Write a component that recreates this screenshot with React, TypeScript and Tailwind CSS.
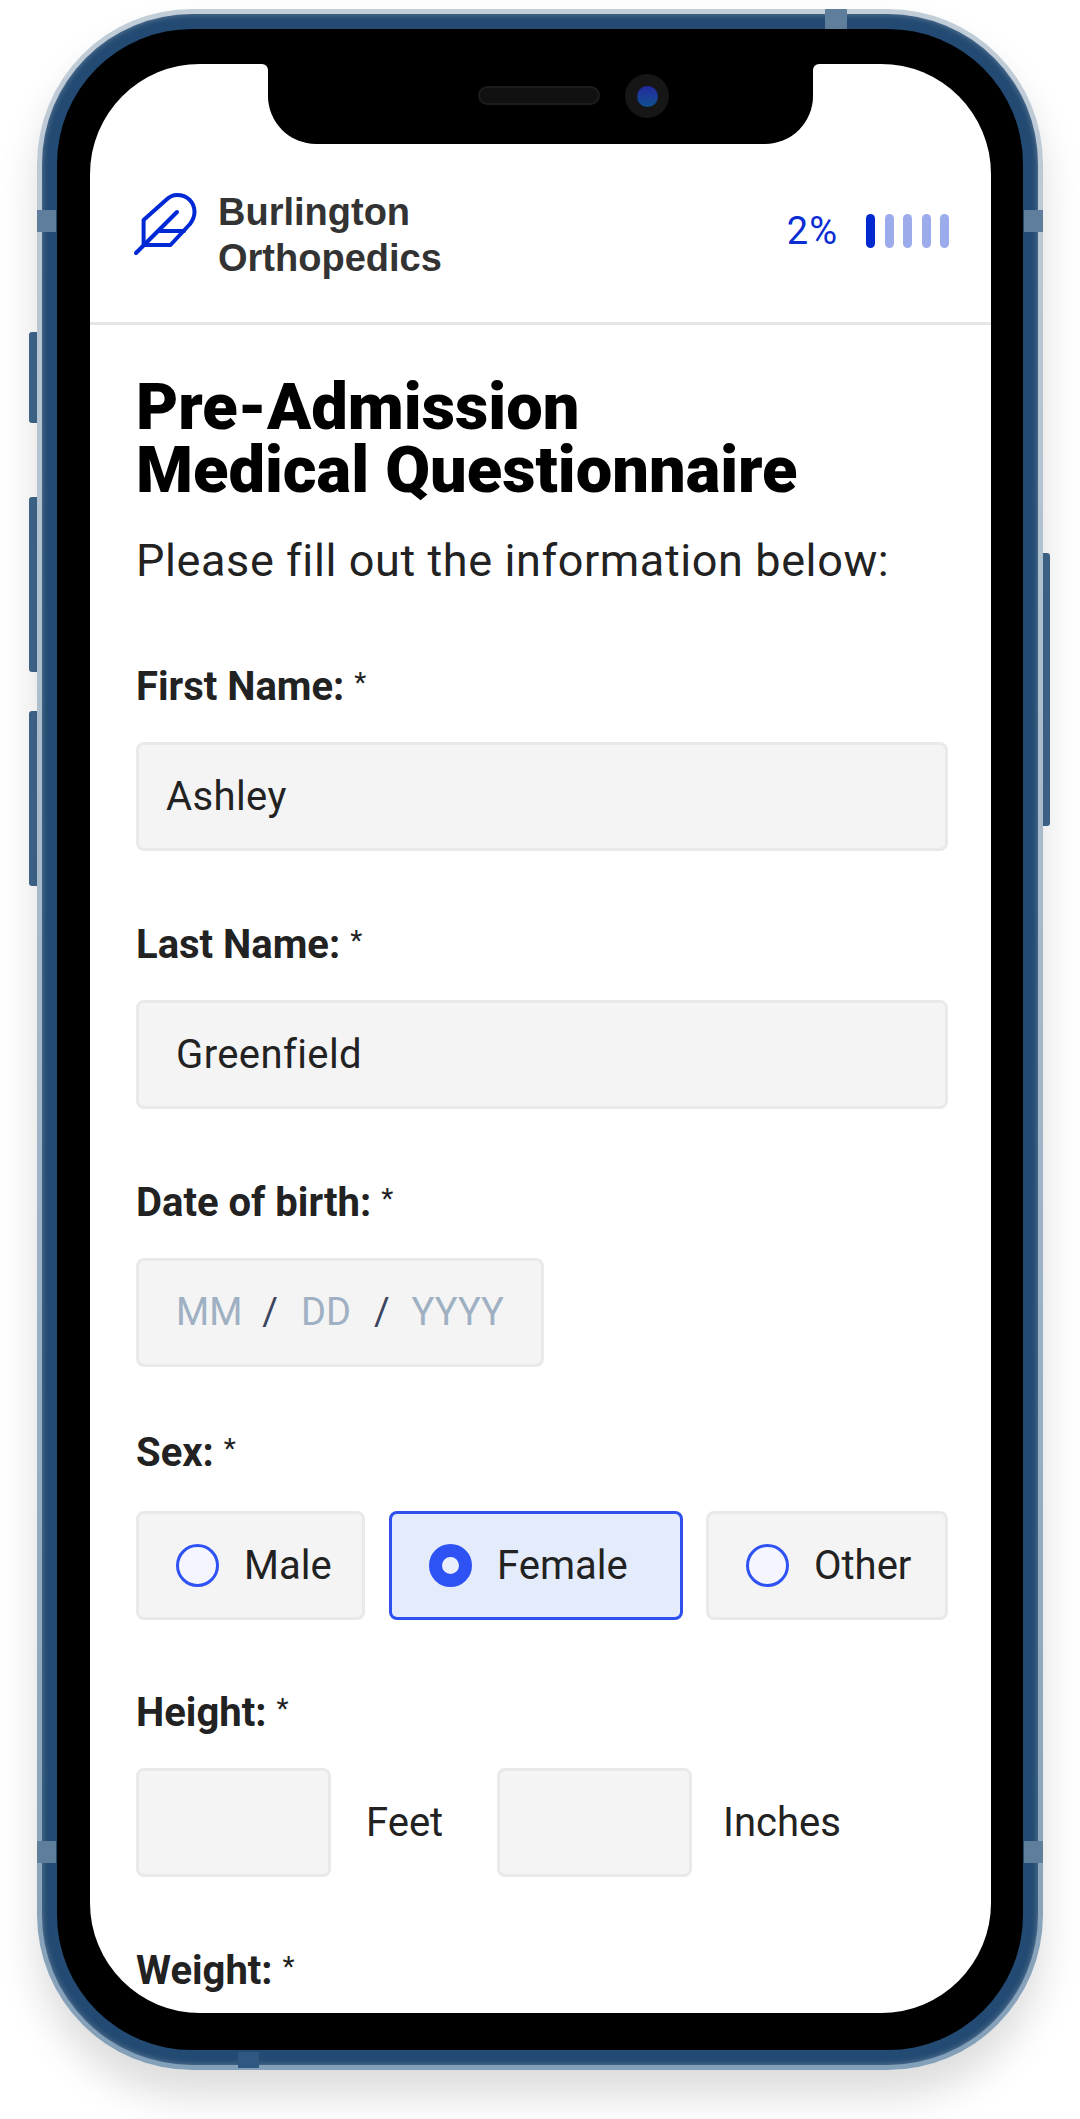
import React from 'react';

function Label({ text, className }: { text: string; className: string }) {
  return (
    <div className={`text-[40px] leading-[46px] font-bold text-[#222] ${className}`}>
      {text} <span className="align-[8px] text-[28px] leading-none font-normal">*</span>
    </div>
  );
}

function Field({ children, className }: { children?: React.ReactNode; className: string }) {
  return (
    <div className={`h-[109px] shrink-0 flex items-center rounded-[8px] border-[3px] border-[#e9e9e9] bg-[#f4f4f4] text-[40px] text-[#222] ${className}`}>
      {children}
    </div>
  );
}

function Radio({ label, checked, className }: { label: string; checked?: boolean; className: string }) {
  return (
    <div
      className={`h-[109px] shrink-0 flex items-center rounded-[8px] border-[3px] pl-[37px] ${
        checked ? 'border-[#2d50ee] bg-[#e4ecfc]' : 'border-[#e9e9e9] bg-[#f4f4f4]'
      } ${className}`}
    >
      {checked ? (
        <div className="w-[43px] h-[43px] rounded-full border-[13px] border-[#2f52f5] bg-[#e9effd]" />
      ) : (
        <div className="w-[43px] h-[43px] rounded-full border-[3px] border-[#2f52f5] bg-[#f4f5fe]" />
      )}
      <span className="ml-[25px] text-[40px] text-[#222]">{label}</span>
    </div>
  );
}

export default function App() {
  return (
    <div className="relative w-[1080px] h-[2119px] overflow-hidden bg-white pt-[9px] pl-[37px] font-['Roboto',sans-serif]">
      {/* side buttons */}
      <div className="absolute left-[29px] top-[332px] w-[9px] h-[91px] rounded-l-[3px] bg-[#3f668c]" />
      <div className="absolute left-[29px] top-[497px] w-[9px] h-[175px] rounded-l-[3px] bg-[#3f668c]" />
      <div className="absolute left-[29px] top-[711px] w-[9px] h-[175px] rounded-l-[3px] bg-[#3f668c]" />
      <div className="absolute left-[1042px] top-[553px] w-[8px] h-[273px] rounded-r-[3px] bg-[#3f668c]" />

      <div className="relative w-[1006px] h-[2061px] rounded-[155px] bg-linear-to-b from-[#c1cdd7] to-[#84a0b8] p-[5px] shadow-[0_26px_40px_rgba(0,0,0,0.14)]">
        <div className="w-full h-full rounded-[150px] bg-[#234a72] shadow-[inset_0_0_6px_rgba(255,255,255,0.3)] pt-[15px] pb-[15px] pl-[15px] pr-[15px]">
          <div className="w-full h-full rounded-[135px] bg-black pt-[35px] pb-[37px] pl-[33px] pr-[32px]">
            <div className="relative w-full h-full rounded-[110px] overflow-hidden bg-white">
              {/* notch */}
              <div className="absolute left-[178px] top-0 w-[545px] h-[80px] rounded-b-[48px] bg-black">
                <div className="absolute left-[210px] top-[22px] w-[122px] h-[19px] rounded-full bg-[#111] border-[2px] border-[#1c1c1c]" />
                <div className="absolute left-[357px] top-[10px] w-[44px] h-[44px] rounded-full bg-[#161616] flex items-center justify-center">
                  <div className="w-[21px] h-[21px] rounded-full bg-linear-to-b from-[#2426a0] to-[#0c4f8e]" />
                </div>
              </div>
              <div className="absolute left-[172px] top-0 w-[6px] h-[6px] bg-black">
                <div className="w-full h-full rounded-tr-[6px] bg-white" />
              </div>
              <div className="absolute left-[723px] top-0 w-[6px] h-[6px] bg-black">
                <div className="w-full h-full rounded-tl-[6px] bg-white" />
              </div>

              {/* header */}
              <div className="h-[261px] border-b-[3px] border-[#e6e6e6] flex items-start pt-[125px] pl-[42px] pr-[42px]">
                <svg className="mt-[3px] shrink-0" width="66" height="66" viewBox="0 0 66 66" fill="none" stroke="#0029d6" strokeWidth="4" strokeLinecap="round" strokeLinejoin="round">
                  <path d="M4 61 L45 20" />
                  <path d="M11.6 53 V28 L34 8 C38 4 42 3 45 3 C55 3 62.5 10 62.5 20 C62.5 25 61 28 58 32 L38.5 53 H11.6" />
                  <path d="M28 39 H52" />
                </svg>
                <div className="ml-[20px] font-['Liberation_Sans',sans-serif] font-bold text-[38px] leading-[46px] text-[#333]">
                  Burlington
                  <br />
                  Orthopedics
                </div>
                <div className="ml-auto mt-[25px] flex items-center">
                  <span className="text-[38px] leading-[34px] tracking-[1px] text-[#0a2dd4]">2%</span>
                  <div className="ml-[28px] flex gap-[9.5px]">
                    <div className="w-[9px] h-[34px] rounded-full bg-[#0029cf]" />
                    <div className="w-[9px] h-[34px] rounded-full bg-[#9cabeb]" />
                    <div className="w-[9px] h-[34px] rounded-full bg-[#9cabeb]" />
                    <div className="w-[9px] h-[34px] rounded-full bg-[#9cabeb]" />
                    <div className="w-[9px] h-[34px] rounded-full bg-[#9cabeb]" />
                  </div>
                </div>
              </div>

              {/* form */}
              <div className="pl-[46px] pr-[43px]">
                <h1 className="mt-[51px] font-black text-[65px] leading-[63px] text-black">
                  Pre-Admission
                  <br />
                  Medical Questionnaire
                </h1>
                <p className="mt-[32px] text-[45px] leading-[54px] tracking-[0.6px] text-[#222]">Please fill out the information below:</p>

                <Label text="First Name:" className="mt-[76px]" />
                <Field className="mt-[32px] w-[812px] pl-[27px] tracking-[0.4px]">Ashley</Field>

                <Label text="Last Name:" className="mt-[71px]" />
                <Field className="mt-[32px] w-[812px] pl-[37px] tracking-[0.4px]">Greenfield</Field>

                <Label text="Date of birth:" className="mt-[71px]" />
                <Field className="mt-[32px] w-[408px] pl-[37px]">
                  <div className="flex text-[38px] text-[#9fb0c3]">
                    <span>MM</span>
                    <span className="ml-[20px] text-[#3d4460]">/</span>
                    <span className="ml-[23px]">DD</span>
                    <span className="ml-[23px] text-[#3d4460]">/</span>
                    <span className="ml-[22px]">YYYY</span>
                  </div>
                </Field>

                <Label text="Sex:" className="mt-[63px]" />
                <div className="mt-[35px] flex">
                  <Radio label="Male" className="w-[229px]" />
                  <Radio label="Female" checked className="ml-[24px] w-[294px]" />
                  <Radio label="Other" className="ml-[23px] w-[242px]" />
                </div>

                <Label text="Height:" className="mt-[70px]" />
                <div className="mt-[32px] flex items-center text-[40px] text-[#222]">
                  <Field className="w-[195px]" />
                  <span className="ml-[35px] w-[131px]">Feet</span>
                  <Field className="w-[195px]" />
                  <span className="ml-[31px]">Inches</span>
                </div>

                <Label text="Weight:" className="mt-[71px]" />
              </div>
            </div>
          </div>
        </div>

        {/* antenna bands on the frame */}
        <div className="absolute left-0 top-[201px] w-[19px] h-[22px] bg-[#5f7e9c]" />
        <div className="absolute right-0 top-[201px] w-[19px] h-[22px] bg-[#5f7e9c]" />
        <div className="absolute left-0 top-[1832px] w-[19px] h-[22px] bg-[#5f7e9c]" />
        <div className="absolute right-0 top-[1832px] w-[19px] h-[22px] bg-[#5f7e9c]" />
        <div className="absolute left-[788px] top-0 w-[22px] h-[20px] bg-[#5f7e9c]" />
        <div className="absolute left-[201px] bottom-[2px] w-[21px] h-[16px] bg-[#2f5780]" />
      </div>
    </div>
  );
}
